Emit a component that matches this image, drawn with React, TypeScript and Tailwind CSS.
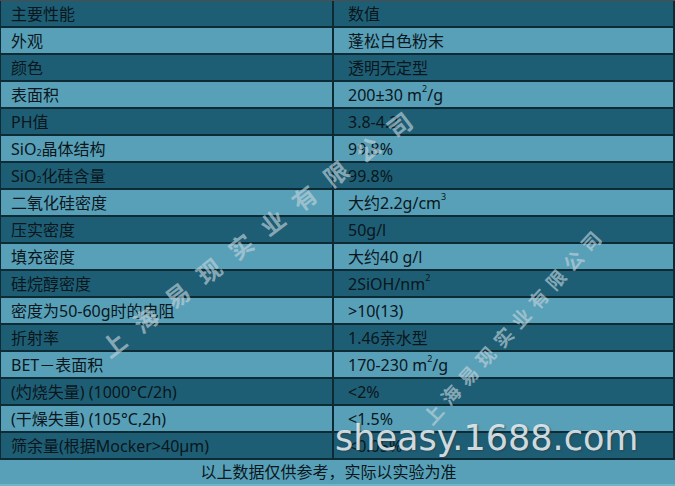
import React from "react";

type Row = [React.ReactNode, React.ReactNode];

const Sub = ({ children }: { children: React.ReactNode }) => (
  <sub className="text-[9px] relative top-[4px] align-baseline">{children}</sub>
);
const Sup = ({ children }: { children: React.ReactNode }) => (
  <sup className="text-[9px] relative top-[-6px] align-baseline">{children}</sup>
);

const rows: Row[] = [
  ["主要性能", "数值"],
  ["外观", "蓬松白色粉末"],
  ["颜色", "透明无定型"],
  ["表面积", <>200±30 m<Sup>2</Sup>/g</>],
  ["PH值", "3.8-4.2"],
  [<>SiO<Sub>2</Sub>晶体结构</>, "99.8%"],
  [<>SiO<Sub>2</Sub>化硅含量</>, "99.8%"],
  ["二氧化硅密度", <>大约2.2g/cm<Sup>3</Sup></>],
  ["压实密度", "50g/l"],
  ["填充密度", "大约40 g/l"],
  ["硅烷醇密度", <>2SiOH/nm<Sup>2</Sup></>],
  ["密度为50-60g时的电阻", ">10(13)"],
  ["折射率", "1.46亲水型"],
  ["BET－表面积", <>170-230 m<Sup>2</Sup>/g</>],
  ["(灼烧失量) (1000°C/2h)", "<2%"],
  ["(干燥失重) (105°C,2h)", "<1.5%"],
  ["筛余量(根据Mocker>40µm)", "<0.05%"],
];

export default function App() {
  return (
    <div className="relative w-[675px] h-[486px] overflow-hidden bg-[#58a0b8] border-t border-[#4d4d4d] font-['Noto_Sans','Noto_Sans_CJK_SC',sans-serif] text-[16px] leading-none text-[#09161b]">
      {rows.map(([label, value], i) => (
        <div
          key={i}
          className={
            i % 2 === 0
              ? "flex h-[27px] border-b-2 border-[#0d2a35] bg-[#1e5e75]"
              : "flex h-[27px] border-b-2 border-[#0d2a35] bg-[#58a0b8]"
          }
        >
          <div className="w-[334px] shrink-0 flex items-center border-l border-r-2 border-[#0d2a35] pl-[10px] whitespace-nowrap">
            {label}
          </div>
          <div className="flex-1 flex items-center border-r-2 border-[#0d2a35] pl-[14px] whitespace-nowrap">
            {value}
          </div>
        </div>
      ))}
      <div className="flex h-[26px] items-center justify-center border-b-2 border-[#6bb5cb] bg-[#58a0b8] pr-[18px]">
        以上数据仅供参考，实际以实验为准
      </div>

      {/* diagonal watermark 1 */}
      <div className="pointer-events-none absolute left-[104px] top-[338px] origin-[0_50%] rotate-[-37.5deg] whitespace-nowrap text-[24px] leading-[24px] tracking-[16px] font-bold text-[#c3d3da]/65 font-['Noto_Sans_CJK_SC',sans-serif]">
        上海易现实业有限公司
      </div>
      {/* diagonal watermark 2 */}
      <div className="pointer-events-none absolute left-[426px] top-[410px] origin-[0_50%] rotate-[-47.6deg] whitespace-nowrap text-[19px] leading-[19px] tracking-[7px] font-bold text-[#c3d3da]/65 font-['Noto_Sans_CJK_SC',sans-serif]">
        上海易现实业有限公司
      </div>
      {/* site watermark */}
      <div className="pointer-events-none absolute left-[335px] top-[420px] whitespace-nowrap text-[35px] leading-[35px] text-[#e6eef1]/90 font-['DejaVu_Sans',sans-serif] [text-shadow:1px_1px_2px_rgba(50,60,65,0.7)]">
        sheasy.1688.com
      </div>
    </div>
  );
}
